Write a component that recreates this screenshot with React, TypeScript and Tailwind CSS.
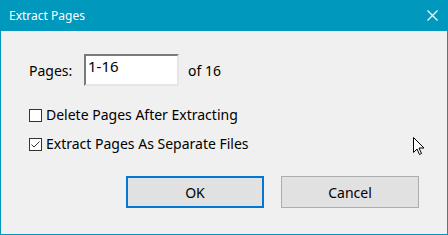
import React from 'react';

const font = { fontFamily: '"Noto Sans", "Open Sans", sans-serif' };

const CheckRow: React.FC<{ label: string; checked?: boolean }> = ({ label, checked }) => (
  <div className="flex items-center h-[16px]">
    <span className="w-[13px] h-[13px] border border-[#333333] bg-white flex items-center justify-center">
      {checked && (
        <svg width="11" height="11" viewBox="0 0 11 11">
          <path d="M1.5 5.5 L4 8 L9.5 2.5" fill="none" stroke="#333" strokeWidth="1" />
        </svg>
      )}
    </span>
    <span className="ml-[4px] text-[14px] text-black leading-none">{label}</span>
  </div>
);

export default function App() {
  return (
    <div className="w-[448px] h-[235px] flex flex-col border border-t-0 border-[#0098bc] bg-[#f0f0f0] relative" style={font}>
      <div className="h-[31px] bg-[#0098bc] flex items-center justify-between pl-[9px] pr-[10px] -mx-px">
        <span className="text-white text-[12px]">Extract Pages</span>
        <svg width="11" height="11" viewBox="0 0 11 11">
          <path d="M0.5 0.5 L10.5 10.5 M10.5 0.5 L0.5 10.5" stroke="white" strokeWidth="1.2" />
        </svg>
      </div>
      <div className="flex items-center mt-[23px] ml-[28px]">
        <span className="text-[14px] w-[55px]">Pages:</span>
        <div className="w-[95px] h-[32px] bg-white border-2 border-t-[#7a7a7a] border-l-[#7a7a7a] border-r-[#e6e6e6] border-b-[#e6e6e6] px-[2px] text-[15px] leading-[20px]">1-16</div>
        <span className="text-[14px] ml-[9px]">of 16</span>
      </div>
      <div className="ml-[28px] mt-[21px] flex flex-col gap-[13px]">
        <CheckRow label="Delete Pages After Extracting" />
        <CheckRow label="Extract Pages As Separate Files" checked />
      </div>
      <div className="flex ml-[125px] mt-[24px] gap-[17px]">
        <button className="w-[138px] h-[32px] border-2 border-[#0078d7] bg-[#e1e1e1] text-[14px]">OK</button>
        <button className="w-[138px] h-[32px] border border-[#adadad] bg-[#e1e1e1] text-[14px]">Cancel</button>
      </div>
      <svg className="absolute left-[412px] top-[137px]" width="12" height="19" viewBox="0 0 12 19">
        <path d="M0.5 0.5 L0.5 15.5 L4 12 L6.5 17.5 L8.5 16.5 L6 11 L11 11 Z" fill="white" stroke="black" strokeWidth="1" />
      </svg>
    </div>
  );
}
